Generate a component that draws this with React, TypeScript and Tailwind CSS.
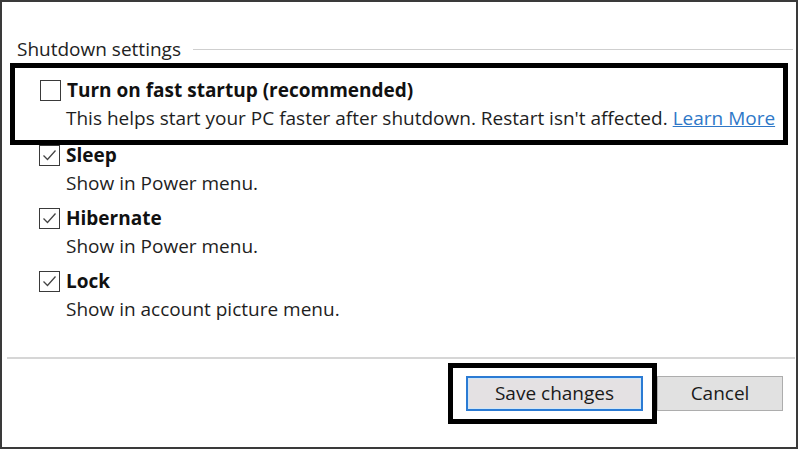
import React from "react";

const font = { fontFamily: '"Open Sans", "Noto Sans", "Liberation Sans", sans-serif' };

function Check({ checked }: { checked: boolean }) {
  return (
    <div className="w-[21px] h-[21px] border-[1.5px] border-[#3a3a3a] bg-white flex items-center justify-center shrink-0">
      {checked && (
        <svg width="17" height="17" viewBox="0 0 17 17" fill="none">
          <polyline points="2.5,8.5 6.5,12.5 14.5,3.5" stroke="#444" strokeWidth="1.3" />
        </svg>
      )}
    </div>
  );
}

function Item({ title, desc }: { title: string; desc: string }) {
  return (
    <div className="flex flex-col">
      <div className="h-[28px] flex items-center gap-[6px] pl-[37px]">
        <Check checked />
        <span className="font-bold text-[19px] text-[#111]">{title}</span>
      </div>
      <div className="h-[28px] flex items-center pl-[64px] text-[19px] text-[#1e1e1e]">{desc}</div>
    </div>
  );
}

export default function App() {
  return (
    <div className="w-[800px] h-[450px] bg-white overflow-hidden" style={font}>
      <div className="w-[798px] h-[449px] border-2 border-[#3a3a3a] flex flex-col">
        <div className="mt-[33px] h-[28px] flex items-center pl-[15px] pr-[3px]">
          <span className="text-[19px] text-[#222]">Shutdown settings</span>
          <div className="flex-1 ml-[12px] h-px bg-[#cfcfcf]" />
        </div>
        <div className="relative z-10 ml-[8px] w-[778px] border-[5px] border-black bg-white pt-[8px] pb-[8px] pl-[25px]">
          <div className="h-[28px] flex items-center gap-[6px]">
            <Check checked={false} />
            <span className="font-bold text-[19px] text-[#111]">Turn on fast startup (recommended)</span>
          </div>
          <div className="h-[28px] flex items-center pl-[26px] text-[19px] text-[#1e1e1e]">
            <span>This helps start your PC faster after shutdown. Restart isn't affected.</span>
            <span className="ml-[5px] text-[#2f78c8] underline">Learn More</span>
          </div>
        </div>
        <div className="-mt-[4px] flex flex-col gap-[7px]">
          <Item title="Sleep" desc="Show in Power menu." />
          <Item title="Hibernate" desc="Show in Power menu." />
          <Item title="Lock" desc="Show in account picture menu." />
        </div>
        <div className="mt-[34px] ml-[5px] mr-[1px] h-[2px] bg-[#d6d6d6]" />
        <div className="mt-[4px] flex justify-end pr-[13px]">
          <div className="w-[209px] h-[61px] border-[5px] border-black pl-[13px] pt-[8px]">
            <div className="w-[177px] h-[35px] border-2 border-[#2b7bd4] bg-[#e4e1e3] shadow-[inset_0_0_0_1px_#cfe6f8] flex items-center justify-center text-[19px] text-[#1a1a1a]">
              Save changes
            </div>
          </div>
          <div className="mt-[13px] w-[126px] h-[35px] border border-[#adadad] bg-[#e1e1e1] flex items-center justify-center text-[19px] text-[#1a1a1a]">
            Cancel
          </div>
        </div>
      </div>
    </div>
  );
}
